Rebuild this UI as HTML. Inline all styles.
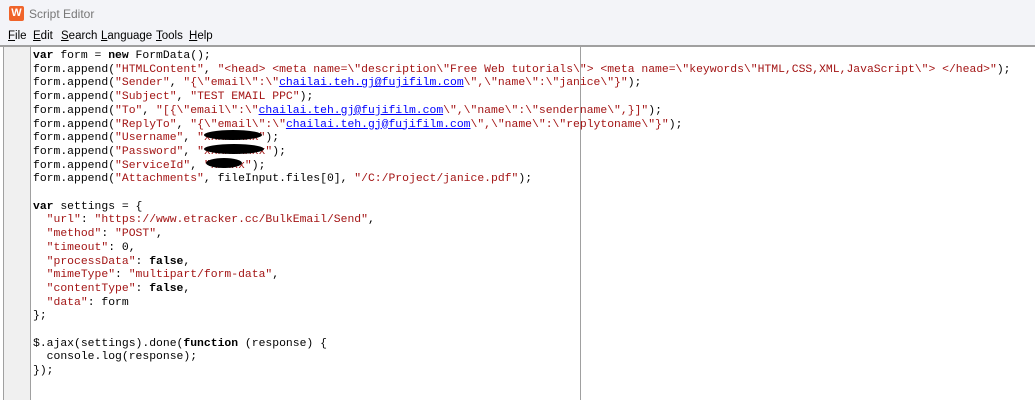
<!DOCTYPE html>
<html><head><style>
body{margin:0;width:1035px;height:400px;overflow:hidden;background:#fff;font-family:"Liberation Sans",sans-serif;position:relative}
#title{position:absolute;left:0;top:0;width:1035px;height:28px;background:#f3f4f8}
#logo{position:absolute;left:9px;top:6px;width:15px;height:15px;background:#f0642a;color:#fff;font:bold 11px "Liberation Sans";text-align:center;line-height:15px;border-radius:2px}
#tt{position:absolute;left:29px;top:7px;font-size:12px;color:#777}
#menu{position:absolute;left:0;top:28px;width:1035px;height:17px;background:#f3f4f8;border-bottom:2px solid #a0a0a0;font-size:11.5px;color:#000}
#menu span{position:absolute;top:2px}
#menu u{text-decoration:underline}
#gut{position:absolute;left:3px;top:47px;width:26px;height:353px;background:#f0f0f0;border-left:1px solid #a0a0a0;border-right:1px solid #a0a0a0}
#edge{position:absolute;left:580px;top:47px;width:1px;height:353px;background:#a0a0a0}
pre{position:absolute;left:33px;top:50px;margin:0;font:11.4px/13.7px "Liberation Mono",monospace;color:#000}
.s{color:#a31515}
b{font-weight:bold}
a{color:#0000ff;text-decoration:underline}
.r{position:absolute;background:#000;border-radius:50%}
</style></head><body>
<div id="title"><div id="logo">W</div><div id="tt">Script Editor</div></div>
<div id="menu"><span style="left:8px"><u>F</u>ile</span><span style="left:33px"><u>E</u>dit</span><span style="left:61px"><u>S</u>earch</span><span style="left:101px"><u>L</u>anguage</span><span style="left:156px"><u>T</u>ools</span><span style="left:189px"><u>H</u>elp</span></div>
<div id="gut"></div>
<div id="edge"></div>
<pre><b>var</b> form = <b>new</b> FormData();
form.append(<span class="s">"HTMLContent"</span>, <span class="s">"&lt;head&gt; &lt;meta name=\"description\"Free Web tutorials\"&gt; &lt;meta name=\"keywords\"HTML,CSS,XML,JavaScript\"&gt; &lt;/head&gt;"</span>);
form.append(<span class="s">"Sender"</span>, <span class="s">"{\"email\":\"<a>chailai.teh.gj@fujifilm.com</a>\",\"name\":\"janice\"}"</span>);
form.append(<span class="s">"Subject"</span>, <span class="s">"TEST EMAIL PPC"</span>);
form.append(<span class="s">"To"</span>, <span class="s">"[{\"email\":\"<a>chailai.teh.gj@fujifilm.com</a>\",\"name\":\"sendername\",}]"</span>);
form.append(<span class="s">"ReplyTo"</span>, <span class="s">"{\"email\":\"<a>chailai.teh.gj@fujifilm.com</a>\",\"name\":\"replytoname\"}"</span>);
form.append(<span class="s">"Username"</span>, <span class="s">"xxxxxxxx"</span>);
form.append(<span class="s">"Password"</span>, <span class="s">"xxxxxxxxx"</span>);
form.append(<span class="s">"ServiceId"</span>, <span class="s">"xxxxx"</span>);
form.append(<span class="s">"Attachments"</span>, fileInput.files[0], <span class="s">"/C:/Project/janice.pdf"</span>);

<b>var</b> settings = {
  <span class="s">"url"</span>: <span class="s">"https://www.etracker.cc/BulkEmail/Send"</span>,
  <span class="s">"method"</span>: <span class="s">"POST"</span>,
  <span class="s">"timeout"</span>: 0,
  <span class="s">"processData"</span>: <b>false</b>,
  <span class="s">"mimeType"</span>: <span class="s">"multipart/form-data"</span>,
  <span class="s">"contentType"</span>: <b>false</b>,
  <span class="s">"data"</span>: form
};

$.ajax(settings).done(<b>function</b> (response) {
  console.log(response);
});</pre>
<div class="r" style="left:204px;top:130px;width:58px;height:10px"></div>
<div class="r" style="left:204px;top:144px;width:60px;height:10px"></div>
<div class="r" style="left:206px;top:158px;width:36px;height:10px"></div>
</body></html>
